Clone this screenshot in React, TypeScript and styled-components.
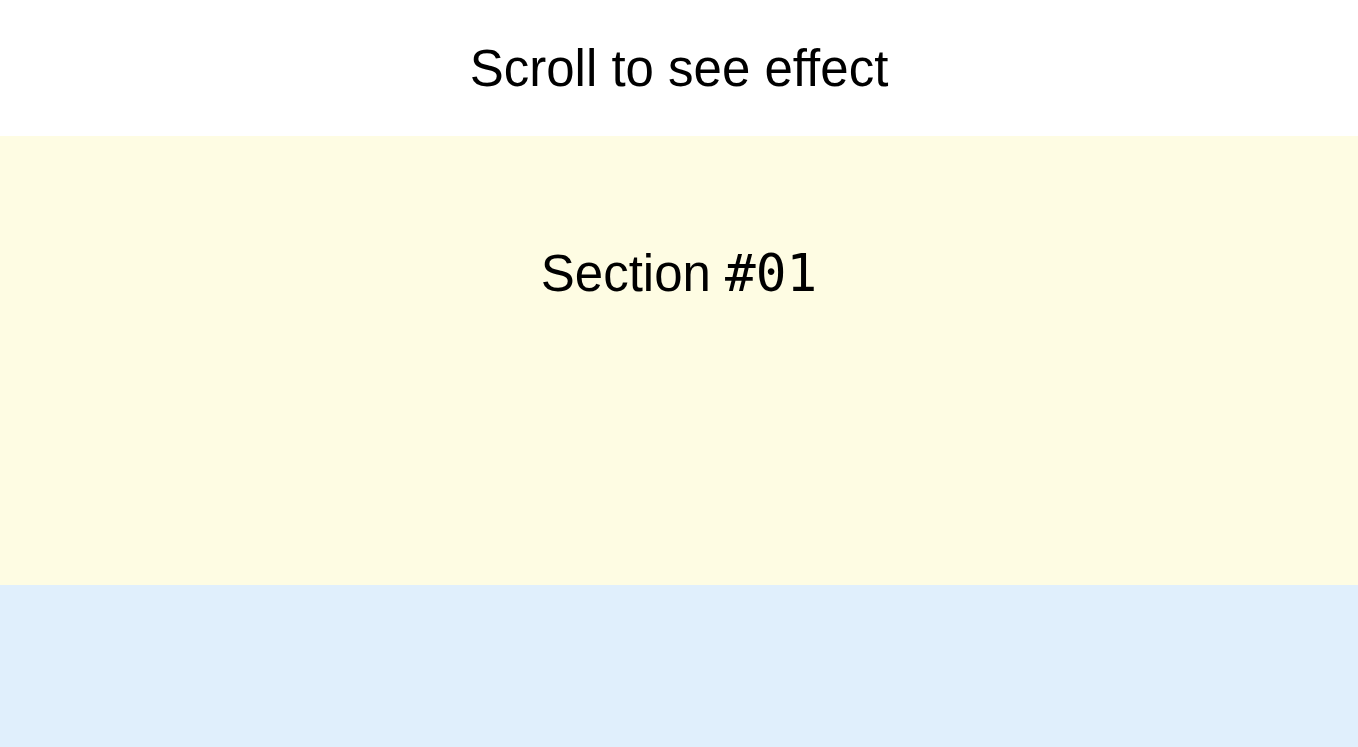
import styled, { createGlobalStyle } from "styled-components";

const GlobalStyle = createGlobalStyle`
	html, body {
		margin: 0;
		padding: 0;
		background: #ffffff;
		color: #000000;
		font-family: "Liberation Sans", Arial, Helvetica, sans-serif;
	}
`;

const Wrapper = styled.div`
	display: flex;
	flex-direction: column;
	width: 100%;
`;

const Header = styled.header`
	height: 136px;
	display: flex;
	align-items: center;
	justify-content: center;
`;

const Title = styled.h1`
	margin: 0;
	font-size: 51px;
	font-weight: 400;
	line-height: 1;
`;

const Section = styled.section<{ $bg: string }>`
	height: 449px;
	background-color: ${(p) => p.$bg};
	display: flex;
	flex-direction: column;
	align-items: center;
	padding-top: 112px;
	box-sizing: border-box;
`;

const SectionTitle = styled.h2`
	margin: 0;
	font-size: 51px;
	font-weight: 400;
	line-height: 1;
`;

const Num = styled.span`
	font-family: "DejaVu Sans Mono", "Liberation Mono", monospace;
`;

const sections = [
	{ id: "01", bg: "#fefce3" },
	{ id: "02", bg: "#e0effc" },
	{ id: "03", bg: "#fde4e4" },
];

export default function App() {
	return <>
		<GlobalStyle />
		<Wrapper>
			<Header>
				<Title>Scroll to see effect</Title>
			</Header>
			{sections.map((s, i) => (
				<Section key={s.id} $bg={s.bg}>
					{i === 0 && (
						<SectionTitle>
							Section <Num>#{s.id}</Num>
						</SectionTitle>
					)}
				</Section>
			))}
		</Wrapper>
	</>
}
